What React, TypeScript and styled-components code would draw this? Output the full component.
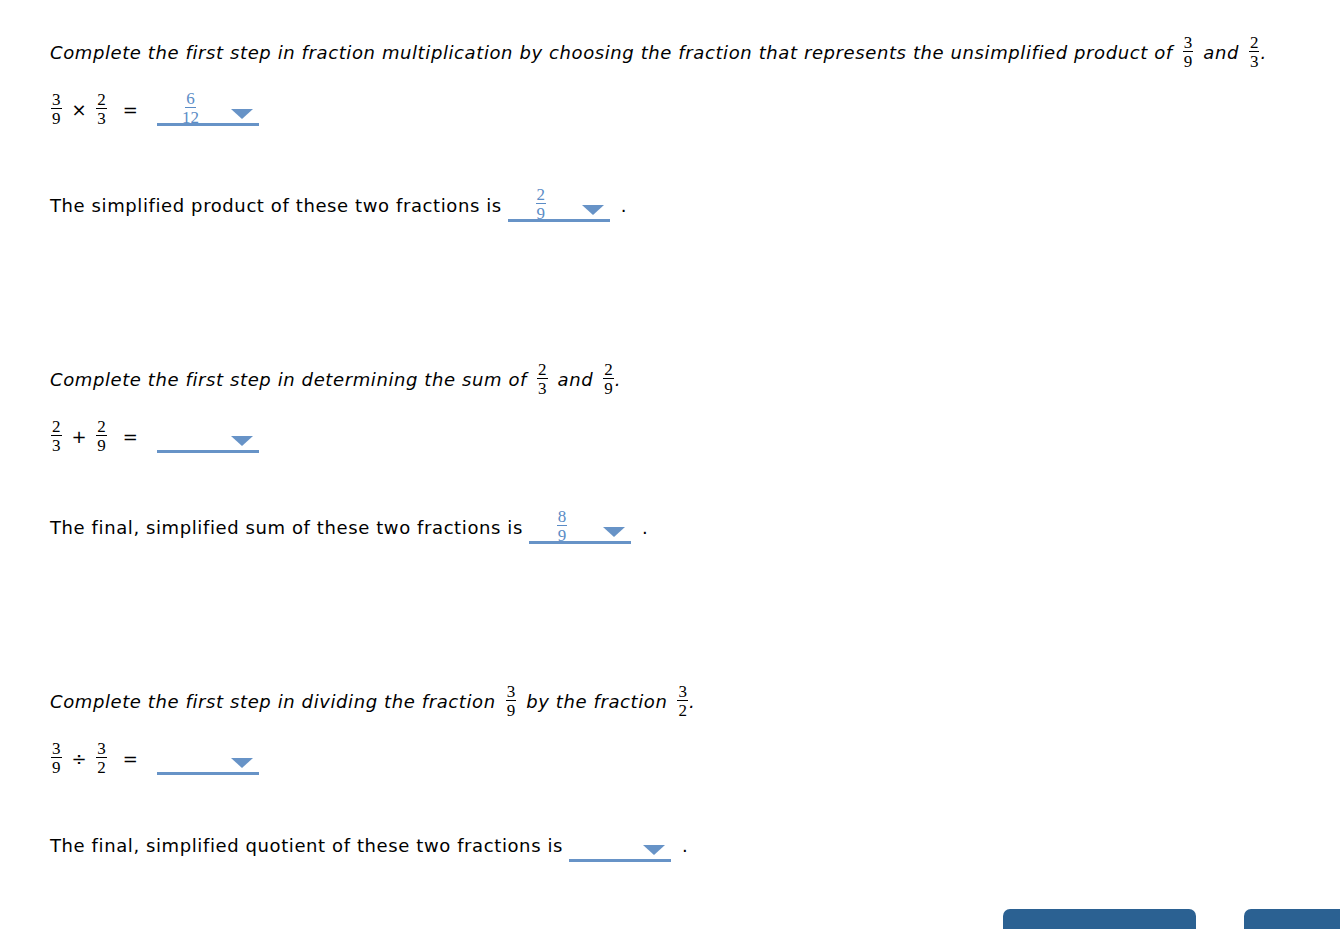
import React from 'react';
import styled, { createGlobalStyle } from 'styled-components';

const GlobalStyle = createGlobalStyle`
  html, body {
    margin: 0;
    padding: 0;
    background: #ffffff;
  }
  body {
    font-family: "DejaVu Sans", Verdana, sans-serif;
    color: #000000;
    overflow: hidden;
  }
`;

const Page = styled.div`
  width: 1340px;
  height: 929px;
  box-sizing: border-box;
  padding: 35px 0 0 50px;
  position: relative;
`;

const Question = styled.section<{ $gap: number }>`
  margin-bottom: ${p => p.$gap}px;
`;

const TextRow = styled.div`
  display: flex;
  align-items: center;
  height: 34px;
  font-size: 18px;
  letter-spacing: 0.6px;
  white-space: nowrap;
`;

const Prompt = styled(TextRow)`
  font-style: italic;
  gap: 9px;
`;

const Equation = styled(TextRow)`
  margin-top: 23px;
`;

const Statement = styled(TextRow)<{ $top: number }>`
  margin-top: ${p => p.$top}px;
`;

const Operator = styled.span`
  margin: 0 8px 0 9px;
`;

const Equals = styled.span`
  margin: 0 19px 0 15px;
`;

const Frac = styled.span<{ $blue?: boolean }>`
  display: inline-flex;
  flex-direction: column;
  align-items: center;
  font-family: "Liberation Serif", "Times New Roman", serif;
  font-style: normal;
  font-size: 17px;
  letter-spacing: 0;
  line-height: 15px;
  padding: 0 1px;
  color: ${p => (p.$blue ? '#5b8cc6' : '#000000')};
`;

const Num = styled.span<{ $blue?: boolean }>`
  padding: 0 1px 1px;
  border-bottom: 1px solid ${p => (p.$blue ? '#5b8cc6' : '#000000')};
`;

const Den = styled.span`
  padding-top: 2px;
`;

const Dot = styled.span`
  margin-left: -9px;
`;

const Dropdown = styled.span<{ $ml?: number }>`
  position: relative;
  display: inline-flex;
  align-items: flex-end;
  width: 102px;
  height: 34px;
  margin-left: ${p => p.$ml ?? 0}px;
  border-bottom: 3px solid #6793c7;
  box-sizing: border-box;
`;

const Selected = styled.span`
  width: 66px;
  display: flex;
  justify-content: center;
  margin-bottom: -2px;
`;

const Caret = styled.svg`
  position: absolute;
  right: 6px;
  bottom: 4px;
`;

const Period = styled.span`
  margin-left: 11px;
`;

const ButtonBar = styled.div`
  position: absolute;
  bottom: 0;
  left: 1003px;
  display: flex;
  gap: 48px;
`;

const NavButton = styled.div<{ $w: number }>`
  width: ${p => p.$w}px;
  height: 20px;
  background: #2b6192;
  border-radius: 7px 7px 0 0;
`;

const Fraction = ({ n, d, blue }: { n: number; d: number; blue?: boolean }) => (
  <Frac $blue={blue}>
    <Num $blue={blue}>{n}</Num>
    <Den>{d}</Den>
  </Frac>
);

const Select = ({ value, ml }: { value?: [number, number]; ml?: number }) => (
  <Dropdown $ml={ml}>
    <Selected>{value && <Fraction n={value[0]} d={value[1]} blue />}</Selected>
    <Caret width="22" height="10" viewBox="0 0 22 10">
      <polygon points="0,0 22,0 11,10" fill="#6793c7" />
    </Caret>
  </Dropdown>
);

export default function App() {
  return (
    <>
      <GlobalStyle />
      <Page>
        <Question $gap={140}>
          <Prompt>
            <span>
              Complete the first step in fraction multiplication by choosing the fraction that represents the
              unsimplified product of
            </span>
            <Fraction n={3} d={9} />
            <span>and</span>
            <Fraction n={2} d={3} />
            <Dot>.</Dot>
          </Prompt>
          <Equation>
            <Fraction n={3} d={9} />
            <Operator>×</Operator>
            <Fraction n={2} d={3} />
            <Equals>=</Equals>
            <Select value={[6, 12]} />
          </Equation>
          <Statement $top={62}>
            The simplified product of these two fractions is
            <Select value={[2, 9]} ml={6} />
            <Period>.</Period>
          </Statement>
        </Question>

        <Question $gap={140}>
          <Prompt>
            <span>Complete the first step in determining the sum of</span>
            <Fraction n={2} d={3} />
            <span>and</span>
            <Fraction n={2} d={9} />
            <Dot>.</Dot>
          </Prompt>
          <Equation>
            <Fraction n={2} d={3} />
            <Operator>+</Operator>
            <Fraction n={2} d={9} />
            <Equals>=</Equals>
            <Select />
          </Equation>
          <Statement $top={57}>
            The final, simplified sum of these two fractions is
            <Select value={[8, 9]} ml={6} />
            <Period>.</Period>
          </Statement>
        </Question>

        <Question $gap={0}>
          <Prompt>
            <span>Complete the first step in dividing the fraction</span>
            <Fraction n={3} d={9} />
            <span>by the fraction</span>
            <Fraction n={3} d={2} />
            <Dot>.</Dot>
          </Prompt>
          <Equation>
            <Fraction n={3} d={9} />
            <Operator>÷</Operator>
            <Fraction n={3} d={2} />
            <Equals>=</Equals>
            <Select />
          </Equation>
          <Statement $top={53}>
            The final, simplified quotient of these two fractions is
            <Select ml={6} />
            <Period>.</Period>
          </Statement>
        </Question>

        <ButtonBar>
          <NavButton $w={193} />
          <NavButton $w={120} />
        </ButtonBar>
      </Page>
    </>
  );
}
